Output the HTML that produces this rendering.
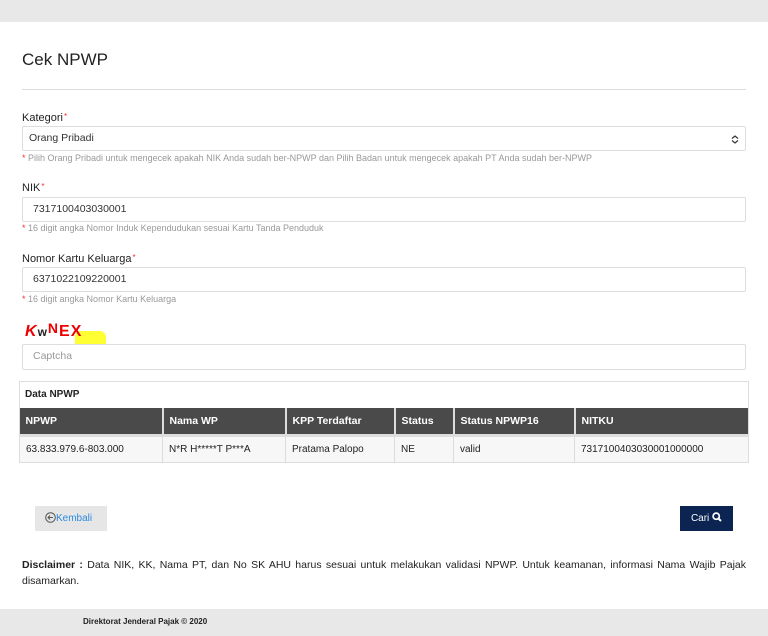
<!DOCTYPE html>
<html><head><style>
*{margin:0;padding:0;box-sizing:border-box}
body{width:768px;height:636px;background:#fff;font-family:"Liberation Sans",Arial,sans-serif;color:#222;position:relative;overflow:hidden}
.a{position:absolute}
.lbl{font-size:11px;color:#222}
.lbl i{color:#e33;font-style:normal;font-size:8px;vertical-align:top;margin-left:1px}
.inp{position:absolute;left:22px;width:724px;height:25px;border:1px solid #ddd;border-radius:2px;font-size:10.5px;padding-left:10px;line-height:23px;color:#333}
.hint{font-size:9px;color:#999}
.hint b{color:#e33;font-weight:normal}
table{border-collapse:collapse;font-size:10px}
th{background:#4a4a4a;color:#fff;text-align:left;font-weight:bold;height:27px;padding-left:6px;border-right:2px solid #ddd;font-size:10.5px}
td{background:#f7f7f7;height:27px;padding-left:6px;border-right:1px solid #ddd;border-top:3px solid #ddd;color:#222}
</style></head><body>
<div class="a" style="left:0;top:0;width:768px;height:22px;background:#e8e8e8"></div>
<div class="a" style="left:22px;top:50px;font-size:17px;color:#222">Cek NPWP</div>
<div class="a" style="left:22px;top:89px;width:724px;height:1px;background:#ddd"></div>

<div class="a lbl" style="left:22px;top:112px">Kategori<i>*</i></div>
<div class="inp" style="top:126px;padding-left:6px">Orang Pribadi<svg style="position:absolute;right:6px;top:8px" width="8" height="9" viewBox="0 0 8 9"><path d="M1 3.5L4 1L7 3.5M1 5.5L4 8L7 5.5" fill="none" stroke="#333" stroke-width="1.2"/></svg></div>
<div class="a hint" style="left:22px;top:153px"><b>*</b> Pilih Orang Pribadi untuk mengecek apakah NIK Anda sudah ber-NPWP dan Pilih Badan untuk mengecek apakah PT Anda sudah ber-NPWP</div>

<div class="a lbl" style="left:22px;top:182px">NIK<i>*</i></div>
<div class="inp" style="top:197px">7317100403030001</div>
<div class="a hint" style="left:22px;top:223px"><b>*</b> 16 digit angka Nomor Induk Kependudukan sesuai Kartu Tanda Penduduk</div>

<div class="a lbl" style="left:22px;top:253px">Nomor Kartu Keluarga<i>*</i></div>
<div class="inp" style="top:267px">6371022109220001</div>
<div class="a hint" style="left:22px;top:294px"><b>*</b> 16 digit angka Nomor Kartu Keluarga</div>

<div class="a" style="left:75px;top:331px;width:31px;height:13px;background:#ff3;border-radius:6px 6px 0 0"></div>
<div class="a" style="left:25px;top:320px;font-size:16px;font-weight:bold;letter-spacing:1px"><span style="color:#e00;font-style:italic">K</span><span style="color:#222;font-size:12px">w</span><span style="color:#e00;font-size:14px;vertical-align:3px">N</span><span style="color:#e00">EX</span></div>
<div class="inp" style="top:344px;height:26px;color:#999">Captcha</div>

<div class="a" style="left:19px;top:381px;width:730px;height:82px;border:1px solid #ddd"></div>
<div class="a" style="left:25px;top:389px;font-size:10px;font-weight:bold">Data NPWP</div>
<table class="a" style="left:19px;top:408px;width:730px">
<tr><th style="width:143px">NPWP</th><th style="width:123px">Nama WP</th><th style="width:109px">KPP Terdaftar</th><th style="width:59px">Status</th><th style="width:121px">Status NPWP16</th><th style="border-right:1px solid #ddd">NITKU</th></tr>
<tr><td style="border-left:1px solid #ddd">63.833.979.6-803.000</td><td>N*R H*****T P***A</td><td>Pratama Palopo</td><td>NE</td><td>valid</td><td>7317100403030001000000</td></tr>
</table>
<div class="a" style="left:19px;top:462px;width:730px;height:1px;background:#ddd"></div>

<div class="a" style="left:35px;top:506px;width:72px;height:25px;background:#e6e6e6;font-size:10px;color:#2a8be0;line-height:25px;padding-left:10px"><svg width="11" height="11" viewBox="0 0 11 11" style="vertical-align:-2px"><circle cx="5.5" cy="5.5" r="4.8" fill="none" stroke="#555" stroke-width="1"/><path d="M8 5.5H3M5 3.5L3 5.5L5 7.5" fill="none" stroke="#555" stroke-width="1"/></svg>Kembali</div>
<div class="a" style="left:680px;top:506px;width:53px;height:25px;background:#0b2452;color:#fff;font-size:10px;line-height:25px;text-align:center">Cari <svg width="10" height="10" viewBox="0 0 10 10" style="vertical-align:-1px"><circle cx="4.2" cy="4.2" r="3.1" fill="none" stroke="#fff" stroke-width="1.7"/><path d="M6.4 6.4L9 9" stroke="#fff" stroke-width="2"/></svg></div>

<div class="a" style="left:22px;top:557px;width:724px;font-size:10.5px;line-height:16px;text-align:justify;color:#222"><b>Disclaimer :</b> Data NIK, KK, Nama PT, dan No SK AHU harus sesuai untuk melakukan validasi NPWP. Untuk keamanan, informasi Nama Wajib Pajak disamarkan.</div>

<div class="a" style="left:0;top:609px;width:768px;height:27px;background:#e8e8e8"></div>
<div class="a" style="left:83px;top:617px;font-size:8px;font-weight:bold;color:#222">Direktorat Jenderal Pajak © 2020</div>
</body></html>
